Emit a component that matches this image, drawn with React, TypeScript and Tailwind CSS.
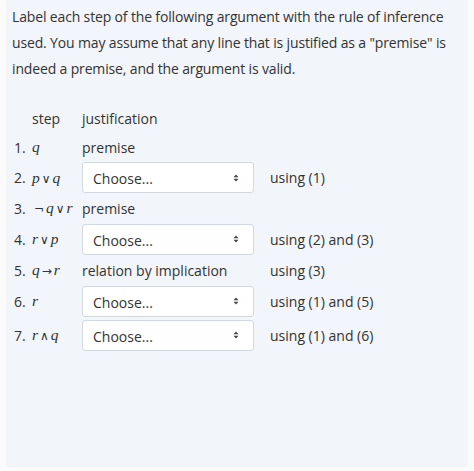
import React from "react";

const Arrows = () => (
  <svg width="8" height="10" viewBox="0 0 8 10" className="absolute right-[13px] top-1/2 -translate-y-1/2">
    <path d="M4 1.5 L6.5 4.2 L1.5 4.2 Z" fill="#444" />
    <path d="M4 8.5 L6.5 5.8 L1.5 5.8 Z" fill="#444" />
  </svg>
);

const Select = () => (
  <div className="relative h-[31px] w-[172px] rounded-[3px] border border-[#d3d8de] bg-white flex items-center pl-[10px] pt-[2px] text-[14px] text-[#333]">
    Choose...
    <Arrows />
  </div>
);

const M = ({ children }: { children: React.ReactNode }) => (
  <span className="italic tracking-normal" style={{ fontFamily: '"Liberation Serif", "DejaVu Serif", serif' }}>{children}</span>
);
const O = ({ children }: { children: React.ReactNode }) => (
  <span className="not-italic px-[2px]" style={{ fontFamily: '"DejaVu Sans", "Liberation Serif", serif', fontSize: "12px" }}>{children}</span>
);

type Row = { n: string; expr: React.ReactNode; just: "sel" | string; using?: string; h: number };

const rows: Row[] = [
  { n: "1.", expr: <M>q</M>, just: "premise", h: 28 },
  { n: "2.", expr: <M>p<O>∨</O>q</M>, just: "sel", using: "using (1)", h: 33 },
  { n: "3.", expr: <M><O>¬</O>q<O>∨</O>r</M>, just: "premise", h: 28 },
  { n: "4.", expr: <M>r<O>∨</O>p</M>, just: "sel", using: "using (2) and (3)", h: 34 },
  { n: "5.", expr: <M>q<O>→</O>r</M>, just: "relation by implication", using: "using (3)", h: 28 },
  { n: "6.", expr: <M>r</M>, just: "sel", using: "using (1) and (5)", h: 34 },
  { n: "7.", expr: <M>r<O>∧</O>q</M>, just: "sel", using: "using (1) and (6)", h: 34 },
];

export default function App() {
  return (
    <div className="w-[474px] h-[471px] bg-[#fbfbfb] flex justify-center [font-variant-ligatures:none]" style={{ fontFamily: '"Open Sans", sans-serif' }}>
      <div className="w-[460px] h-[465px] bg-[#f2f5f9] text-[#333] shadow-[0_1px_3px_rgba(0,0,0,0.06)] pl-[5px] pt-[4px]">
        <p className="text-[14px] tracking-[-0.15px] leading-[26px] pr-2">
          Label each step of the following argument with the rule of inference used. You may assume that any line that is justified as a "premise" is indeed a premise, and the argument is valid.
        </p>
        <div className="mt-[21px] text-[14px]">
          <div className="flex items-center h-[30px]">
            <div className="w-[20px]" />
            <div className="w-[50px]">step</div>
            <div>justification</div>
          </div>
          {rows.map((r, i) => (
            <div key={i} className="flex items-center" style={{ height: r.h }}>
              <div className="w-[20px] pl-[2px]">{r.n}</div>
              <div className="w-[50px] text-[15.5px]">{r.expr}</div>
              <div className="w-[188px]">{r.just === "sel" ? <Select /> : r.just}</div>
              <div>{r.using}</div>
            </div>
          ))}
        </div>
      </div>
    </div>
  );
}
